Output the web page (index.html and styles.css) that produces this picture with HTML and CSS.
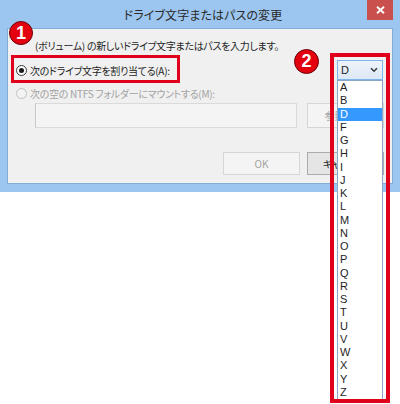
FILE: index.html
```html
<!DOCTYPE html>
<html lang="ja">
<head>
<meta charset="utf-8">
<title>ドライブ文字またはパスの変更</title>
<link rel="stylesheet" href="styles.css">
</head>
<body>
<div class="stage">
  <div class="window">
    <div class="titlebar">
      <span class="spacer"></span>
      <div class="title">ドライブ文字またはパスの変更</div>
      <div class="close-wrap">
        <button class="close" type="button" aria-label="閉じる">
          <svg width="9" height="8" viewBox="0 0 9 8"><path d="M1 0.8 L8 7.2 M8 0.8 L1 7.2" stroke="#fff" stroke-width="1.9" fill="none"/></svg>
        </button>
      </div>
    </div>
    <div class="content">
      <p class="desc">(ボリューム) の新しいドライブ文字またはパスを入力します。</p>
      <div class="row row-assign">
        <label class="radio-label">
          <span class="radio checked"></span>
          <span>次のドライブ文字を割り当てる(A):</span>
        </label>
        <div class="combo-wrap">
          <div class="combo">
            <span>D</span>
            <svg class="chev" width="8" height="6" viewBox="0 0 8 6"><path d="M1 1.2 L4 4.2 L7 1.2" stroke="#3c3c3c" stroke-width="1.6" fill="none"/></svg>
          </div>
          <ul class="list">
            <li>A</li><li>B</li><li class="sel">D</li><li>F</li><li>G</li><li>H</li><li>I</li><li>J</li><li>K</li><li>L</li><li>M</li><li>N</li><li>O</li><li>P</li><li>Q</li><li>R</li><li>S</li><li>T</li><li>U</li><li>V</li><li>W</li><li>X</li><li>Y</li><li>Z</li>
          </ul>
        </div>
      </div>
      <label class="radio-label disabled row-mount">
        <span class="radio"></span>
        <span>次の空の NTFS フォルダーにマウントする(M):</span>
      </label>
      <div class="path-row">
        <div class="textbox"></div>
        <button class="btn disabled" type="button">参照(R)...</button>
      </div>
      <div class="actions">
        <button class="btn disabled" type="button">OK</button>
        <button class="btn" type="button">キャンセル</button>
      </div>
    </div>
  </div>

  <div class="marker marker-1">1</div>
  <div class="marker marker-2">2</div>
  <div class="hl hl-1"></div>
  <div class="hl hl-2"></div>
</div>
</body>
</html>
```
FILE: styles.css
```css
html, body {
  margin: 0;
  padding: 0;
  background: #ffffff;
}

body {
  font-family: "Noto Sans CJK JP", "Noto Sans", sans-serif;
  font-feature-settings: "palt";
  color: #1e1e1e;
}

.stage {
  position: relative;
  width: 400px;
  height: 404px;
  overflow: hidden;
}

.window {
  width: 400px;
  box-sizing: border-box;
  background: #9cc6ef;
  padding: 0 7px 8px 7px;
}

.titlebar {
  height: 28px;
  display: grid;
  grid-template-columns: 1fr auto 1fr;
  align-items: start;
}

.title {
  font-size: 12px;
  line-height: 29px;
  color: #2a2a2a;
  letter-spacing: 0.1px;
  padding-left: 6px;
}

.close-wrap {
  display: flex;
  justify-content: flex-end;
}

.close {
  width: 26px;
  height: 20px;
  border: 0;
  padding: 0;
  margin: 0;
  background: #c9504c;
  display: flex;
  align-items: center;
  justify-content: center;
}

.content {
  height: 156px;
  box-sizing: border-box;
  background: #f0f0f0;
  border: 1px solid #84acd8;
  padding: 0 8px 0 8px;
  font-size: 10px;
  letter-spacing: -0.3px;
}

.desc {
  margin: 9px 0 0 0;
  padding-left: 19px;
  line-height: 16px;
  white-space: nowrap;
}

.row {
  display: flex;
  align-items: center;
}

.row-assign {
  height: 20px;
  margin-top: 6px;
}

.radio-label {
  display: flex;
  align-items: center;
  gap: 3px;
  height: 16px;
  white-space: nowrap;
}

.radio {
  width: 11px;
  height: 11px;
  box-sizing: border-box;
  border-radius: 50%;
  border: 1px solid #3b3b3b;
  background: #fbfbfb;
  display: flex;
  align-items: center;
  justify-content: center;
  flex: none;
}

.radio.checked::after {
  content: "";
  width: 5px;
  height: 5px;
  border-radius: 50%;
  background: #1a1a1a;
}

.disabled {
  color: #a2a2a2;
}

.radio-label.disabled .radio {
  border-color: #c2c2c2;
  background: #f3f3f3;
}

.row-mount {
  margin-top: 5px;
}

.combo-wrap {
  margin-left: auto;
  margin-right: 1px;
  position: relative;
  width: 46px;
  letter-spacing: 0;
}

.combo {
  height: 20px;
  box-sizing: border-box;
  border: 1px solid #7eb4ea;
  background: linear-gradient(#eef4fb, #dce8f5);
  display: flex;
  align-items: center;
  justify-content: space-between;
  padding: 0 4px 0 3px;
  font-family: "Liberation Sans", sans-serif;
  font-size: 11px;
  color: #1e1e1e;
}

.chev {
  display: block;
}

.list {
  position: absolute;
  left: 0;
  top: 20px;
  width: 46px;
  box-sizing: border-box;
  margin: 0;
  padding: 0;
  list-style: none;
  background: #ffffff;
  border: 1px solid #8aa6c8;
  font-family: "Liberation Sans", sans-serif;
  font-size: 11px;
  color: #1e1e1e;
  z-index: 2;
}

.list li {
  height: 13.25px;
  line-height: 13.25px;
  padding-left: 2px;
}

.list li.sel {
  background: #3399ff;
  color: #ffffff;
}

.path-row {
  display: flex;
  gap: 10px;
  margin-top: 2px;
  padding-left: 19px;
}

.textbox {
  width: 262px;
  height: 25px;
  box-sizing: border-box;
  border: 1px solid #dadada;
  border-left-color: #c8c8c8;
  background: #f4f4f4;
}

.btn {
  width: 77px;
  height: 25px;
  box-sizing: border-box;
  border: 1px solid #acacac;
  background: #e5e5e5;
  font-family: "Noto Sans CJK JP", sans-serif;
  font-feature-settings: "palt";
  font-size: 10px;
  color: #1e1e1e;
  padding: 0;
  margin: 0;
}

.btn.disabled {
  border-color: #d6d6d6;
  background: #f4f4f4;
  color: #a2a2a2;
}

.actions {
  display: flex;
  justify-content: flex-end;
  gap: 7px;
  margin-top: 24px;
}

.actions .btn {
  height: 23px;
}

.marker {
  position: absolute;
  width: 24px;
  height: 24px;
  box-sizing: border-box;
  border-radius: 50%;
  background: #e3000f;
  border: 1px solid #6a0008;
  color: #ffffff;
  font-family: "Liberation Sans", "DejaVu Sans", sans-serif;
  font-weight: bold;
  font-size: 18px;
  line-height: 22px;
  text-align: center;
  z-index: 3;
}

.marker-1 {
  left: 9px;
  top: 21px;
}

.marker-2 {
  left: 294px;
  top: 49px;
  width: 25px;
  height: 25px;
  line-height: 23px;
}

.hl {
  position: absolute;
  box-sizing: border-box;
  border: 3px solid #e0001b;
  z-index: 4;
}

.hl-1 {
  left: 11px;
  top: 55px;
  width: 169px;
  height: 28px;
}

.hl-2 {
  left: 330px;
  top: 53px;
  width: 60px;
  height: 350px;
  border-width: 4px;
}
```
